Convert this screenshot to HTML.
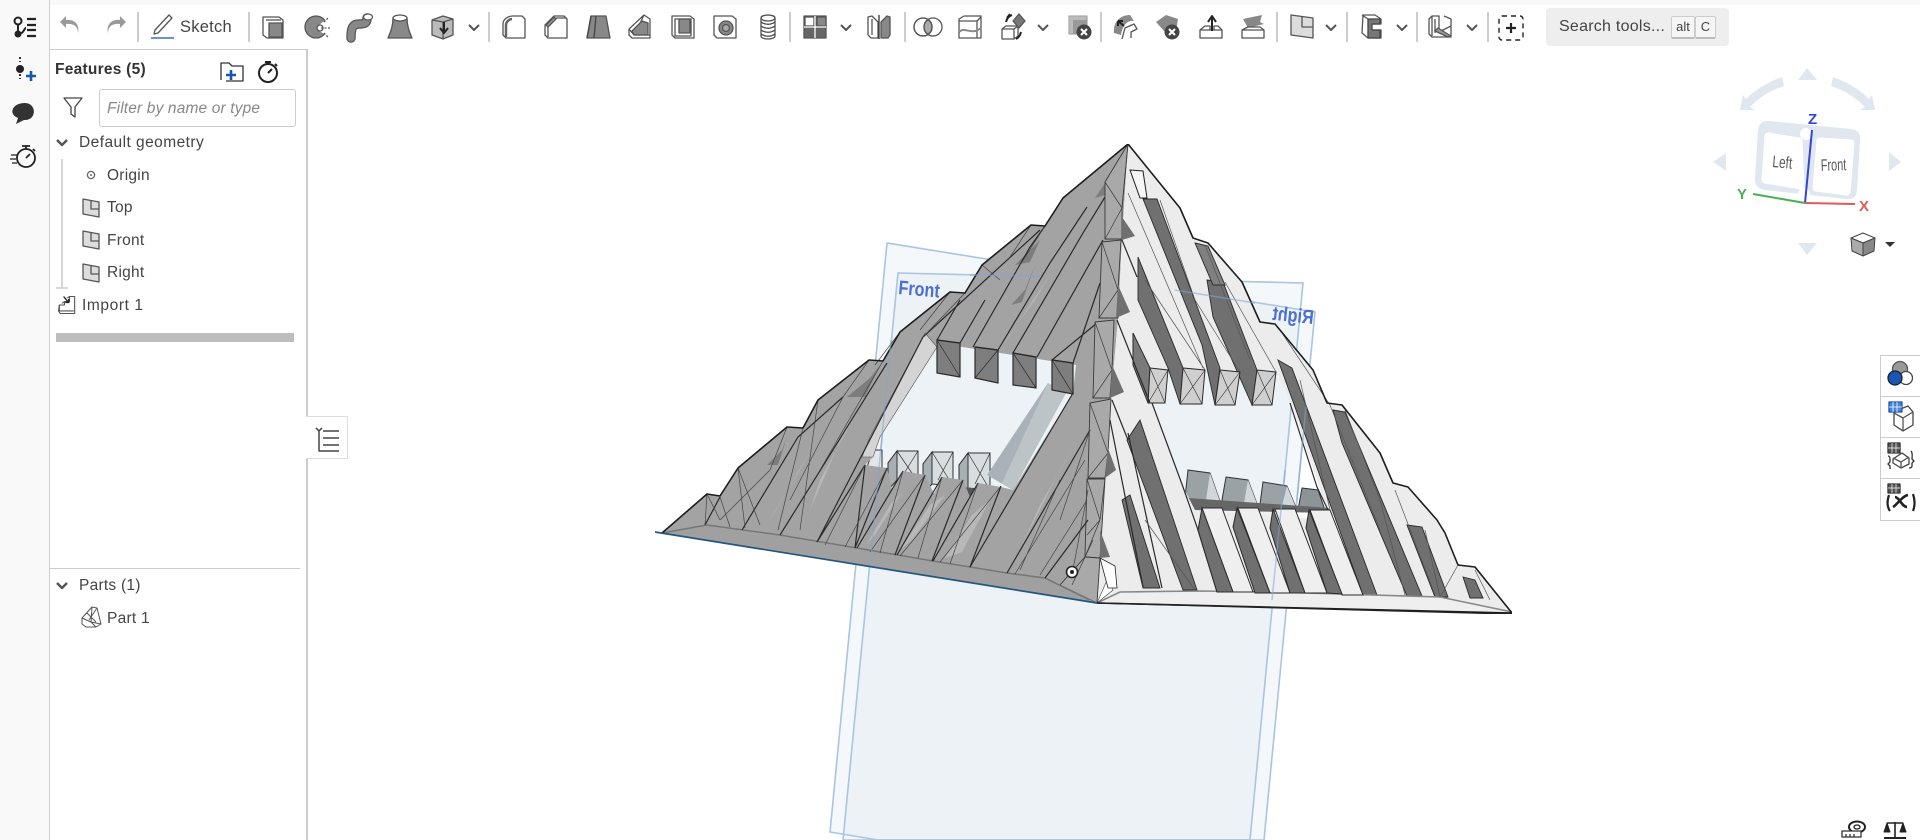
<!DOCTYPE html>
<html><head><meta charset="utf-8"><style>
html,body{margin:0;padding:0;width:1920px;height:840px;overflow:hidden;background:#fff;font-family:"Liberation Sans",sans-serif;color:#444}
.t{position:absolute;white-space:nowrap;font-size:15.5px;line-height:20px;letter-spacing:.25px}
svg{position:absolute;left:0;top:0}
#rail{position:absolute;left:0;top:0;width:50px;height:840px;background:#f9f9f9;border-right:1px solid #ccc;box-sizing:border-box}
#strip{position:absolute;left:0;top:0;width:1920px;height:5px;background:#f8f8f8}
#panel{position:absolute;left:50px;top:49px;width:258px;height:791px;background:#fff;border-top:1px solid #ccc;border-right:2px solid #ccc;box-sizing:border-box}
#search{position:absolute;left:1546px;top:8px;width:183px;height:38px;background:#eeeeee;border-radius:4px}
.k{position:absolute;top:8px;height:23px;background:#f5f5f5;border:1px solid #ccc;border-bottom:2px solid #bbb;border-radius:2px;box-sizing:border-box;font-size:13px;line-height:19px;text-align:center;color:#444}
#rp{position:absolute;left:1880px;top:355px;width:40px;height:166px;background:#fff;border:1px solid #ccc;border-right:0;box-sizing:border-box}
#rp i{position:absolute;left:0;width:40px;height:1px;background:#ccc}
#tab{position:absolute;left:306px;top:416px;width:42px;height:43px;background:#fff;border:1px solid #ddd;border-left:0;box-sizing:border-box}
</style></head><body>
<svg width="1920" height="840" viewBox="0 0 1920 840">
<defs><filter id="b" x="0" y="0" width="100%" height="100%"><feGaussianBlur stdDeviation="0.35"/></filter></defs>
<!-- planes -->
<g fill="rgb(195,210,225)" fill-opacity=".16" stroke="#a9c4e4" stroke-width="1.6">
<polygon points="887,243 1315,312 1264,840 878,840 830,832"/>
<polygon points="898,273 1303,283 1250,840 843,840"/>
</g>
<text transform="translate(898,294) rotate(5) scale(.9,1.1)" font-size="18" font-weight="bold" fill="#4a6fd0" style="font-family:'Liberation Sans',sans-serif">Front</text>
<text transform="translate(1313,324) rotate(-174) scale(.9,-1.1)" font-size="18" font-weight="bold" fill="#4a6fd0" style="font-family:'Liberation Sans',sans-serif">Right</text>
<!-- model -->
<g filter="url(#b)">
<!-- back teeth left -->
<g stroke="#333" stroke-width="1">
<polygon points="873,450 882,450 882,470 866,470" fill="#e4e7e9"/>
<polygon points="897,451 918,451 918,482 897,480 888,490 888,463" fill="#d8dde0"/>
<polygon points="897,451 888,463 888,490 897,480" fill="#a8b0b4"/>
<polygon points="932,452 953,452 953,486 932,484 923,494 923,464" fill="#d8dde0"/>
<polygon points="932,452 923,464 923,494 932,484" fill="#a8b0b4"/>
<polygon points="968,453 990,453 990,490 968,488 959,497 959,465" fill="#d8dde0"/>
<polygon points="968,453 959,465 959,497 968,488" fill="#a8b0b4"/>
<path d="M897,451L918,482M932,452L953,486M968,453L990,490M918,451L903,475M953,452L938,480M990,453L975,484" fill="none" stroke-width=".7"/>
</g>
<polygon points="963,487 1013,493 1010,500 960,500" fill="#555"/>
<polygon points="1002,495 1012,498 1006,506 998,503" fill="#fff"/>
<!-- back teeth right -->
<g stroke="#333" stroke-width="1">
<polygon points="1188,470 1210,473 1222,507 1192,508 1185,498" fill="#9aa2a6"/>
<polygon points="1210,473 1222,507 1205,507" fill="#d0d6da" stroke="none"/>
<polygon points="1226,477 1248,480 1259,509 1230,510 1222,500" fill="#9aa2a6"/>
<polygon points="1248,480 1259,509 1243,509" fill="#d0d6da" stroke="none"/>
<polygon points="1263,482 1287,486 1297,510 1268,510 1260,504" fill="#9aa2a6"/>
<polygon points="1287,486 1297,510 1281,510" fill="#d0d6da" stroke="none"/>
<polygon points="1302,488 1318,490 1325,510 1306,510 1298,510" fill="#8d9498"/>
</g>
<polygon points="1188,498 1330,508 1330,513 1188,510" fill="#666"/>
<!-- left body -->
<path fill-rule="evenodd" fill="#a3a3a3" d="M662,533L707,494 720,496 738,468 787,427 803,428 818,400 869,360 883,361 900,332 950,292 965,293 982,265 1031,225 1045,226 1063,198 1128,144 1122,239 1118,318 1111,399 1105,478 1100,558 1097,603Z
M937,343L1076,365 1073,393 1013,490 1001,487 978,483 970,497 963,480 942,477 934,494 925,475 903,471 892,490 887,468 865,465 873,457 880,437Z"/>
<!-- right body -->
<path fill-rule="evenodd" fill="#ececec" d="M1128,144L1180,208 1193,238 1208,243 1242,282 1260,322 1275,324 1313,370 1327,403 1342,405 1380,453 1393,483 1408,487 1437,520 1445,533 1458,565 1475,567 1512,613 1097,603 1100,558 1105,478 1111,399 1118,318 1122,239Z
M1148,403L1165,403 1169,370 1180,404 1202,404 1206,370 1215,405 1235,405 1242,372 1252,405 1272,405 1277,372 1290,403 1325,503 1336,520 1195,510 1183,487 1152,403Z"/>
<!-- left highlights -->
<g fill="#b8b8b8">
<polygon points="1060,470 1078,440 1040,505 1022,545"/>
<polygon points="800,470 812,448 776,510 768,522"/>
<polygon points="845,430 858,410 820,480 810,510"/>
<polygon points="930,505 945,495 912,540 900,550"/>
<polygon points="890,505 902,492 875,535 866,545"/>
<polygon points="972,515 990,500 962,552 945,558"/>
<polygon points="1035,300 1050,275 1010,335 1002,345"/>
</g>
<polygon points="925,333 937,347 880,437 873,457 862,457 870,437" fill="#d4d4d4" stroke="#555" stroke-width=".6"/>
<polygon points="1048,383 1066,393 1013,490 987,475" fill="#a9b2b8"/>
<polygon points="1048,383 1066,393 1013,490 1002,483" fill="#bcc4c8"/>
<!-- hip darker -->
<g fill="#7d7d7d">
<polygon points="847,397 870,378 880,365 865,397"/>
<polygon points="1011,305 1025,290 1035,265 1022,302"/>
<polygon points="1015,265 1040,240 1030,262"/>
<polygon points="767,465 782,450 787,437 778,465"/>
<polygon points="1095,198 1105,183 1105,195"/>
</g>
<!-- top teeth -->
<g stroke="#2a2a2a" stroke-width="1.2">
<polygon points="937,340 960,343 960,377 937,373" fill="#7e7e7e"/>
<polygon points="975,347 998,350 998,383 975,378" fill="#7e7e7e"/>
<polygon points="1013,353 1036,357 1036,388 1013,385" fill="#7e7e7e"/>
<polygon points="1052,360 1073,363 1073,394 1052,390" fill="#7e7e7e"/>
<path d="M937,340L960,377M975,378L998,350M1013,353L1036,388M1052,360L1073,394" fill="none" stroke-width=".7"/>
<path d="M937,340L960,300M960,343L985,300M937,340L960,343M975,347L998,350M1013,353L1036,357M1052,360L1073,363M973,347L1030,247 1045,226M998,350L1050,263 1087,207M1013,353L1083,233 1105,197M1037,357L1103,240M1052,360L1097,323M1073,363L1100,283" fill="none"/>
</g>
<!-- central column -->
<g fill="#a9a9a9" stroke="#3a3a3a" stroke-width=".9">
<polygon points="1105,182 1128,144 1122,208 1122,239 1105,239"/>
<polygon points="1102,242 1121,240 1118,290 1118,318 1099,318"/>
<polygon points="1095,322 1114,320 1112,370 1110,398 1093,398"/>
<polygon points="1090,403 1111,399 1108,453 1105,478 1088,478"/>
<polygon points="1087,479 1105,479 1100,558 1085,557"/>
<polygon points="1085,557 1100,558 1097,603 1060,585"/>
<path d="M1105,182L1122,208M1105,239L1122,208M1128,144L1122,208M1102,242L1118,290M1099,318L1118,290M1095,322L1112,370M1093,398L1112,370M1090,403L1108,453M1088,478L1108,453M1087,479L1100,520 1085,557M1087,535L1100,520M1093,540L1072,585M1105,479L1100,520" fill="none" stroke-width=".7"/>
</g>
<g fill="#6f6f6f">
<polygon points="1122,217 1135,236 1122,240"/>
<polygon points="1118,285 1130,312 1116,318"/>
<polygon points="1112,365 1124,392 1110,398"/>
<polygon points="1108,448 1116,470 1105,478"/>
<polygon points="1100,530 1110,557 1100,558"/>
</g>
<!-- right dark stripes -->
<g fill="#6f6f6f" stroke="#2a2a2a" stroke-width=".9">
<polygon points="1143,199 1157,199 1220,368 1215,405 1202,345"/>
<polygon points="1138,257 1183,368 1180,404 1168,368 1138,300"/>
<polygon points="1207,280 1223,282 1257,370 1252,405 1213,317"/>
<polygon points="1122,500 1130,495 1160,588 1143,588"/>
<polygon points="1127,440 1140,420 1197,590 1183,590"/>
<polygon points="1278,360 1292,368 1377,595 1363,595"/>
<polygon points="1333,410 1345,412 1422,596 1407,596 1342,443"/>
<polygon points="1407,525 1422,527 1448,597 1435,597"/>
<polygon points="1463,577 1475,580 1483,598 1470,598"/>
<polygon points="1195,243 1208,246 1225,285 1213,285" fill="#808080"/>
</g>
<!-- top teeth right -->
<g stroke="#2a2a2a" stroke-width="1">
<polygon points="1133,333 1150,368 1148,403 1133,365" fill="#7a7a7a"/>
<polygon points="1150,368 1168,370 1165,403 1148,403" fill="#cfcfcf"/>
<polygon points="1183,368 1205,370 1202,404 1180,404" fill="#cfcfcf"/>
<polygon points="1220,370 1240,372 1235,405 1215,405" fill="#cfcfcf"/>
<polygon points="1257,370 1276,372 1272,405 1252,405" fill="#cfcfcf"/>
<path d="M1150,368L1165,403M1168,370L1148,403M1183,368L1202,404M1205,370L1180,404M1220,370L1235,405M1240,372L1215,405M1257,370L1272,405M1276,372L1252,405" fill="none" stroke-width=".6"/>
</g>
<!-- white small top -->
<polygon points="1130,170 1143,171 1147,198 1140,198" fill="#f5f5f5" stroke="#222"/>
<!-- base strips -->
<polygon points="662,533 707,525 780,535 817,542 857,548 895,555 933,561 970,567 1007,573 1045,578 1097,603" fill="#a0a0a0"/>
<path d="M662,533L707,525 780,535 857,548 933,561 1007,573 1045,578 1090,600" fill="none" stroke="#777" stroke-width="1.6"/>
<polygon points="1097,603 1120,592 1200,592 1273,593 1340,594 1440,597 1512,613" fill="#efefef"/>
<path d="M1097,603L1120,592 1200,591 1273,592 1340,594 1440,597 1512,612" fill="none" stroke="#888" stroke-width="1.6"/>
<polygon points="1097,603 1108,578 1113,590" fill="#fff" stroke="#444" stroke-width=".6"/>
<polygon points="1100,558 1115,566 1117,588 1108,588" fill="#fff" stroke="#222" stroke-width=".8"/>
<!-- left mesh -->
<g fill="none" stroke="#2a2a2a" stroke-width="1.2">
<path d="M705,525L720,497M742,530L798,437 843,397M780,535L887,363M817,542L923,337M855,548L865,465M817,542L865,465M887,468L855,548M857,548L903,471M925,475L895,555M897,555L942,477M963,480L932,561M933,561L978,483M1001,486L970,567"/>
<path d="M1007,573L1090,430M970,567L1073,393M1045,578L1088,520M923,337L1040,230"/>
</g>
<g fill="none" stroke="#444" stroke-width=".7">
<path d="M738,468L760,525M738,468L745,528M770,470L720,520M787,427L770,470M803,428L778,530M818,400L800,530M843,397L790,500M869,360L843,397M883,361L820,470M900,332L875,365M950,292L920,330M965,293L925,335M982,265L1000,280M1031,225L1008,260M1045,226L1020,265M707,494L705,525M707,494L720,520M720,497L730,527"/>
<path d="M865,465L825,545M887,468L845,547M903,471L880,553M925,475L870,552M942,477L918,558M963,480L900,556M978,483L950,564M1001,486L940,562M1060,480L1020,570M1085,460L1015,574M1087,500L1040,575M1090,430L1060,520M1072,575L1088,490"/>
</g>
<!-- right edges -->
<g fill="none" stroke="#2a2a2a" stroke-width="1.2">
<path d="M1152,403L1183,487 1197,527 1217,592M1110,420L1143,587M1128,433L1162,588M1290,403L1317,487 1328,510M1122,240L1137,277M1117,320L1150,403M1112,400L1128,440"/>
</g>
<g fill="none" stroke="#555" stroke-width=".7">
<path d="M1128,193L1203,368M1160,200L1195,300 1240,372M1145,280L1205,370M1205,245L1250,360M1225,282L1276,372M1280,330L1330,405 1380,530M1300,380L1330,510 1360,590M1345,410L1380,500 1405,595M1395,490L1435,595M1145,520L1195,590M1425,530L1440,597 1458,565M1475,570L1490,600"/>
</g>
<!-- front teeth right -->
<g stroke="#2a2a2a" stroke-width="1">
<polygon points="1202,508 1222,508 1253,592 1233,592" fill="#efefef"/>
<polygon points="1202,508 1198,530 1217,592 1233,592" fill="#6f6f6f"/>
<polygon points="1238,508 1258,508 1290,593 1270,593" fill="#efefef"/>
<polygon points="1237,508 1233,527 1255,593 1270,593" fill="#6f6f6f"/>
<polygon points="1275,509 1295,509 1327,593 1305,593" fill="#efefef"/>
<polygon points="1273,509 1270,528 1290,593 1305,593" fill="#6f6f6f"/>
<polygon points="1310,510 1330,510 1363,595 1342,595" fill="#efefef"/>
<polygon points="1309,510 1306,528 1327,593 1342,594" fill="#6f6f6f"/>
</g>
<!-- outlines -->
<path fill="none" stroke="#1e1e1e" stroke-width="1.6" stroke-linejoin="round" d="M662,533L707,494 720,496 738,468 787,427 803,428 818,400 869,360 883,361 900,332 950,292 965,293 982,265 1031,225 1045,226 1063,198 1128,144 1180,208 1193,238 1208,243 1242,282 1260,322 1275,324 1313,370 1327,403 1342,405 1380,453 1393,483 1408,487 1437,520 1445,533 1458,565 1475,567 1512,613 1097,603"/>
<path d="M1097,603L1512,614" fill="none" stroke="#222" stroke-width="1.5"/>
<path d="M655,532L1097,603" fill="none" stroke="#26557f" stroke-width="1.7"/>
<!-- origin -->
<circle cx="1072" cy="572" r="5.5" fill="#fff" stroke="#222" stroke-width="1.6"/><circle cx="1072" cy="572" r="2" fill="#222"/>
</g>
<!-- plane lines in front of model -->
<g stroke="#7fa5d6" stroke-opacity=".55" stroke-width="1.5" fill="none">
<path d="M891,340L870,565M970,275L1040,276M1175,290L1255,303M1306,407L1297,500M1285,470L1272,600"/>
</g>
<!-- gizmo -->
<g fill="#e0e7ef">
<polygon points="1807,68 1798,80 1817,80"/>
<polygon points="1713,162 1726,153 1726,171"/><polygon points="1901,162 1889,152 1889,171"/>
<polygon points="1798,243 1817,243 1807,255"/>
<path d="M1782,77L1784,86C1769,91 1759,98 1750,107L1755,110 1740,110 1743,95 1746,99C1756,89 1768,82 1782,77Z"/>
<path d="M1833,77L1831,86C1846,91 1856,98 1865,107L1860,110 1875,110 1872,95 1869,99C1859,89 1847,82 1833,77Z"/>
<path d="M1769,121L1851,129Q1861,130 1860,140L1857,191Q1856,200 1846,199L1765,190Q1754,188 1755,178L1758,131Q1759,120 1769,121Z"/>
</g>
<g fill="#fff" stroke="#fff" stroke-width="7" stroke-linejoin="round">
<polygon points="1768,136 1799,141 1801,186 1765,180"/>
<polygon points="1820,141 1851,143 1847,192 1816,188"/>
</g>
<circle cx="1806" cy="134" r="6" fill="#fff"/><circle cx="1804" cy="194" r="6" fill="#fff"/>
<text transform="translate(1772,167) rotate(5) scale(.85,1.2)" font-size="14" fill="#5a5a5a" style="font-family:'Liberation Sans',sans-serif">Left</text>
<text transform="translate(1821,171) rotate(-2) scale(.78,1.2)" font-size="14" fill="#5a5a5a" style="font-family:'Liberation Sans',sans-serif">Front</text>
<path d="M1805,203L1812,130" stroke="#3344dd" stroke-width="2" fill="none"/>
<path d="M1805,203L1753,194" stroke="#4ab054" stroke-width="2" fill="none"/>
<path d="M1805,203L1855,204" stroke="#e05a5a" stroke-width="2" fill="none"/>
<text x="1808" y="124" font-size="15" font-weight="bold" fill="#3344dd" style="font-family:'Liberation Sans',sans-serif">Z</text>
<text x="1737" y="199" font-size="15" font-weight="bold" fill="#4ab054" style="font-family:'Liberation Sans',sans-serif">Y</text>
<text x="1859" y="211" font-size="15" font-weight="bold" fill="#e05a5a" style="font-family:'Liberation Sans',sans-serif">X</text>
<g stroke="#444" stroke-width="1" stroke-linejoin="round"><polygon points="1851,238 1863,233 1875,238 1863,243" fill="#fff"/><polygon points="1851,238 1863,243 1863,256 1852,251" fill="#aaa"/><polygon points="1875,238 1863,243 1863,256 1874,251" fill="#888"/></g>
<polygon points="1885,242 1895,242 1890,247" fill="#333"/>
</svg>
<div id="strip"></div>
<div id="rail"></div>
<div id="panel"></div>
<div id="tab"></div>
<div id="search"><div class="t" style="left:13px;top:9px;font-size:16px;color:#444">Search tools...</div><div class="k" style="left:125px;width:24px">alt</div><div class="k" style="left:149px;width:21px">C</div></div>
<div id="rp"><i style="top:40px"></i><i style="top:81px"></i><i style="top:122px"></i></div>
<div class="t" style="left:55px;top:60px;font-weight:bold;font-size:15.5px;color:#333">Features (5)</div>
<div style="position:absolute;left:99px;top:89px;width:197px;height:38px;border:1px solid #ccc;border-radius:3px;box-sizing:border-box"></div>
<div class="t" style="left:107px;top:99px;font-style:italic;color:#888;letter-spacing:.15px">Filter by name or type</div>
<div class="t" style="left:79px;top:133px;letter-spacing:.45px">Default geometry</div>
<div class="t" style="left:107px;top:166px">Origin</div>
<div class="t" style="left:107px;top:198px">Top</div>
<div class="t" style="left:107px;top:231px">Front</div>
<div class="t" style="left:107px;top:263px">Right</div>
<div class="t" style="left:82px;top:296px;letter-spacing:.6px">Import 1</div>
<div style="position:absolute;left:56px;top:333px;width:238px;height:9px;background:#bdbdbd"></div>
<div style="position:absolute;left:50px;top:568px;width:250px;height:1px;background:#ccc"></div>
<div class="t" style="left:79px;top:576px">Parts (1)</div>
<div class="t" style="left:107px;top:609px">Part 1</div>
<div class="t" style="left:180px;top:17px;font-size:16.5px;color:#444">Sketch</div>
<!-- UI icons -->
<svg width="1920" height="840" viewBox="0 0 1920 840" style="pointer-events:none">
<g fill="none" stroke="#555" stroke-width="1.3" stroke-linejoin="round">
<!-- separators -->
<g stroke="#ccc" stroke-width="2"><path d="M138,12V42M249,12V42M489,12V42M790,12V42M905,12V42M1101,12V42M1277,12V42M1347,12V42M1417,12V42M1488,12V42"/></g>
<!-- chevrons -->
<g stroke="#555" stroke-width="2"><path d="M469,25l5,5 5-5M841,25l5,5 5-5M1038,25l5,5 5-5M1326,25l5,5 5-5M1397,25l5,5 5-5M1467,25l5,5 5-5"/></g>
<!-- undo/redo -->
<path d="M78,33C78,26 73,23 66,24V28L60,22 66,16V20C74,19 80,24 78,33Z" fill="#9a9a9a" stroke="none"/>
<path d="M108,33C108,26 113,23 120,24V28L126,22 120,16V20C112,19 106,24 108,33Z" fill="#9a9a9a" stroke="none"/>
<!-- pencil -->
<path d="M155,30L169,15 172,18 158,33 154,34Z" stroke="#555"/><path d="M151,38H174" stroke="#3f6fc0" stroke-width="1.6"/>
<!-- extrude -->
<g transform="translate(273,27)"><path d="M-10,-10H6L10,-7V11H-6L-10,8Z" fill="#fff"/><path d="M-7,-7H8"/><rect x="-4" y="-4" width="13" height="14" fill="#888"/></g>
<!-- revolve -->
<g transform="translate(316,27)"><circle r="11" fill="#888"/><path d="M3,-2L12,-9V9L3,4Z" fill="#fff" stroke="none"/><circle cx="4" cy="1" r="3" fill="#fff"/><path d="M5,1H14M8,-5L12,-9M8,6L12,10" stroke-dasharray="2 1.5"/></g>
<!-- sweep -->
<g transform="translate(359,27)"><path d="M-8,11C-8,0 -6,-3 0,-3C6,-3 8,-4 8,-9" stroke="#555" stroke-width="9.5" stroke-linecap="round"/><path d="M-8,11C-8,0 -6,-3 0,-3C6,-3 8,-4 8,-9" stroke="#888" stroke-width="7" stroke-linecap="round"/><ellipse cx="9" cy="-10" rx="4.5" ry="3" fill="#fff"/></g>
<!-- loft -->
<g transform="translate(400,27)"><path d="M-7,-9C-7,0 -10,6 -12,11H12C10,6 7,0 7,-9Z" fill="#888"/><ellipse cy="-9" rx="7" ry="3" fill="#fff"/></g>
<!-- thicken -->
<g transform="translate(443,27)"><path d="M-11,-7L0,-11 10,-8V8L0,12 -11,8Z" fill="#bbb"/><path d="M0,-5L-11,-7M0,-5L10,-8M0,-5V12" /><path d="M1,-5V4M-3,1L1,6 5,1" stroke="#222" stroke-width="2"/></g>
<!-- fillet -->
<g transform="translate(514,27)"><path d="M-11,-3C-11,-8 -6,-11 -1,-11H8L11,-8V11H-8L-11,8Z" fill="#fff"/><path d="M-8,10V-2C-8,-5 -5,-8 -2,-8" stroke="#666" stroke-width="2.5"/></g>
<g transform="translate(556,27)"><path d="M-11,-2L-2,-11H8L11,-8V11H-8L-11,8Z" fill="#fff"/><path d="M-8,10V-2L0,-9H10" /><path d="M-10,-2L-2,-10 0,-8 -8,0Z" fill="#999"/></g>
<g transform="translate(599,27)"><path d="M-8,-11H7L11,11H-12Z" fill="#888"/><path d="M-8,-11L-12,11M-3,-11L-5,11" stroke="#444"/></g>
<g transform="translate(640,27)"><path d="M-11,2L4,-12 10,-8V11H-8L-11,8Z" fill="#fff"/><path d="M-11,2L-6,8H10M4,-12L-3,3" /><path d="M-8,4L2,-6 8,-4V8H-6Z" fill="#888"/></g>
<g transform="translate(683,27)"><path d="M-11,-11H7L11,-8V11H-8L-11,8Z" fill="#fff"/><path d="M-8,-8H8V9H-8Z"/><rect x="-4" y="-8" width="11" height="14" fill="#888"/></g>
<g transform="translate(725,27)"><path d="M-11,-11H7L11,-8V11H-8L-11,8Z" fill="#fff"/><circle cx="1" cy="1" r="7" fill="#888"/><circle cx="1" cy="1" r="3.5" fill="#aaa"/></g>
<g transform="translate(768,27)"><path d="M-7,-9C-7,-13 7,-13 7,-9V9C7,13 -7,13 -7,9Z" fill="#fff"/><ellipse cy="-9" rx="7" ry="3"/><path d="M-7,-5C-3,-2 3,-2 7,-5M-7,-1C-3,2 3,2 7,-1M-7,3C-3,6 3,6 7,3M-7,7C-3,10 3,10 7,7" stroke="#444"/></g>
<!-- pattern -->
<g transform="translate(815,27)"><rect x="-11" y="-11" width="22" height="22" fill="#666"/><rect x="-10" y="-10" width="9" height="9" fill="#fff"/><rect x="2" y="-10" width="9" height="9" fill="#888"/><path d="M-11,0H11M0,-11V11" stroke="#fff"/></g>
<g transform="translate(879,27)"><path d="M-11,-10L-7,-11 -1,-5V11H-8L-11,8Z" fill="#fff"/><path d="M2,-5L8,-11 11,-10V8L9,11H2Z" fill="#888"/><path d="M0,-12V12" stroke="#333"/><path d="M-7,-8V8" /></g>
<!-- boolean -->
<g transform="translate(928,27)"><circle cx="-5" r="9" fill="#fff"/><path d="M0,-7.5A9,9 0 0 1 0,7.5A9,9 0 0 1 0,-7.5Z" fill="#aaa"/><circle cx="-5" r="9"/><circle cx="5" r="9"/></g>
<g transform="translate(970,27)"><path d="M-11,-8L-6,-11H11V11H-11Z" fill="#fff"/><path d="M-11,-6H7L11,-10M7,-6V11"/><path d="M-11,5C-5,-1 1,9 11,1" stroke="#888" stroke-width="2"/></g>
<g transform="translate(1013,27)"><path d="M-11,2L-7,-1H5V9L1,12H-11Z" fill="#fff"/><path d="M-11,2H1V12M1,2L5,-1"/><path d="M6,-13L12,-6 6,1 0,-6Z" fill="#777"/><path d="M-7,-5C-6,-9 -4,-11 -1,-12M-3,-13L-6,-9" stroke="#222" stroke-width="2"/><path d="M8,5C7,9 5,11 3,12" stroke="#222" stroke-width="2"/></g>
<g transform="translate(1079,27)"><rect x="-10" y="-11" width="18" height="18" fill="#bbb" stroke="#aaa"/><rect x="-6" y="-7" width="14" height="14" fill="#999" stroke="none"/><circle cx="5" cy="5" r="7.5" fill="#444" stroke="none"/><path d="M2,2L8,8M8,2L2,8" stroke="#fff" stroke-width="2"/></g>
<!-- direct edit -->
<g transform="translate(1125,27)"><path d="M-11,6C-12,-6 -4,-12 5,-12L9,-6C4,-7 -2,-4 -4,8Z" fill="#888" stroke="none"/><path d="M-3,12L0,1 9,-3 12,2 6,5 6,11" fill="#fff"/><path d="M-7,-6L-1,-1M-7,-6V-1M-7,-6H-2" stroke="#222" stroke-width="2"/></g>
<g transform="translate(1168,27)"><path d="M-12,-5L-2,-12 10,-8 8,4 -4,4Z" fill="#888" stroke="none"/><circle cx="4" cy="5" r="7.5" fill="#444" stroke="none"/><path d="M1,2L7,8M7,2L1,8" stroke="#fff" stroke-width="2"/></g>
<g transform="translate(1211,27)"><path d="M-11,3L-6,-1H-1V3H3V-1H7L11,3V11H-11Z" fill="#fff"/><path d="M-11,3H-1M3,3H11"/><path d="M1,4V-9M-3,-5L1,-11 5,-5" stroke="#222" stroke-width="2"/></g>
<g transform="translate(1253,27)"><path d="M-10,-8L9,-12 7,-5 11,-3 -5,1Z" fill="#888" stroke="none"/><path d="M-11,3L-5,0H7L11,3V11H-11Z" fill="#fff"/><path d="M-11,3H11"/></g>
<!-- plane -->
<g transform="translate(1302,27)"><path d="M-11,-12L11,-9V11L-11,8Z" fill="#ddd"/><path d="M0,-11V0H11"/></g>
<g transform="translate(1371,27)"><path d="M-8,-12H4L10,-8V-3H0V3H10V11H-3L-9,6Z" fill="#fff"/><path d="M-3,-8H9V-3H1V3H9V11H-3Z" fill="#777" stroke="#444"/><path d="M-3,-8L-9,-12"/></g>
<g transform="translate(1440,27)"><path d="M-11,-8L-8,-11H-1V5L11,-1V10H-8L-11,7Z" fill="#fff"/><path d="M-8,-11V9M-5,-8V6M4,-11L11,-8V-1"/><path d="M-5,4L-2,1 11,9 8,10Z" fill="#999"/></g>
<!-- dashed plus -->
<g transform="translate(1511,27)"><rect x="-12" y="-11" width="24" height="24" rx="3" stroke="#222" stroke-dasharray="5 4" stroke-width="1.4"/><path d="M0,-4V6M-5,1H5" stroke="#222" stroke-width="2.2"/></g>
<!-- rail -->
<g transform="translate(24,27)" stroke="#222" stroke-width="2"><circle cx="-6" cy="-6" r="3.5"/><path d="M-6,-2V7" /><circle cx="-6" cy="7" r="2.5" fill="#222"/><path d="M-6,7C0,7 0,1 2,1"/><path d="M3,-8H12M3,-2H12M3,3H12M3,9H12" stroke-width="2.2"/></g>
<g transform="translate(20,68)"><circle r="4" cy="1" fill="#222" stroke="none"/><path d="M0,-11V-6M0,6V11" stroke="#333" stroke-width="2" stroke-dasharray="2 2"/><path d="M6,8H16M11,3V13" stroke="#1a56b0" stroke-width="2.6"/></g>
<path d="M25,103C37,103 37,121 24,120L16,124 18,118C8,114 12,103 25,103Z" fill="#333" stroke="none"/>
<g transform="translate(26,158)" stroke="#222" stroke-width="1.8"><circle r="9"/><path d="M-4,-12H4M0,-12V-9M0,0L4,-4M7,-9L9,-7" /><path d="M-15,-3H-9M-16,1H-10M-14,5H-9" stroke-width="1.2"/></g>
<!-- panel icons -->
<g transform="translate(232,72)"><path d="M-11,8V-9H-3L0,-6H11V9H-6" stroke="#333"/><path d="M-6,3H4M-1,-2V8" stroke="#1a56b0" stroke-width="2.6"/></g>
<g transform="translate(268,72)" stroke="#222" stroke-width="2"><circle r="9" cy="1"/><path d="M-3,-10H3M0,-10V-8M0,1L4,-3M7,-8L9,-6"/></g>
<path d="M64,98H82L75,107V117L71,114V107Z" stroke="#444"/>
<path d="M57,140l5,5 5-5" stroke="#555" stroke-width="2.4"/>
<path d="M57,583l5,5 5-5" stroke="#555" stroke-width="2.4"/>
<path d="M62,159V288M56,288H68" stroke="#ccc" stroke-width="1.6"/>
<circle cx="91" cy="175" r="3.6" stroke="#666"/><circle cx="91" cy="175" r="1" fill="#666" stroke="none"/>
<g fill="#ddd"><path d="M83,199L99,202V217L83,214Z"/><path d="M83,231L99,234V249L83,246Z"/><path d="M83,264L99,267V282L83,279Z"/></g>
<path d="M91,200V209H99M91,232V241H99M91,265V274H99"/>
<g transform="translate(67,305) scale(.85)"><path d="M-9,0H-3V-4H3V-10H9V10H-8L-10,7Z" fill="#fff"/><path d="M-9,0L-9,7H8M-3,-4L-6,-2M3,-10L0,-8"/><path d="M-4,-10L1,-4M-2,-3H2V-7" stroke="#222" stroke-width="1.6"/></g>
<g transform="translate(91,618)" stroke="#555" stroke-width="1"><path d="M-9,6L-9,0 1,-11 6,-10 10,6 5,9H-5Z" fill="#fff"/><path d="M-9,0L0,4 5,9M0,4L1,-11M0,4L10,6M-4,-5L5,4M6,-10L-2,2" /></g>
<!-- tab -->
<path d="M316,428l3,3 3-3M323,431H339M323,438H339M323,445H339M323,451H339M319,431V451H323" stroke="#444" stroke-width="1.5"/>
<!-- right panel icons -->
<g transform="translate(1900,375)"><circle cy="-6" r="7.5" fill="#999" stroke="#555"/><circle cx="6" cy="3" r="6.5" fill="#fff" stroke="#444"/><circle cx="-5" cy="3" r="7" fill="#1a56b0" stroke="#123"/></g>
<g transform="translate(1900,416)"><path d="M-2,-6L8,-10 13,-4V9L3,15 -6,9V-3Z" stroke="#444"/><path d="M-6,-3L3,2 13,-4M3,2V15"/><rect x="-11" y="-14" width="13" height="10" fill="#4a85d8" stroke="#1a56b0"/><path d="M-7,-14V-4M-3,-14V-4M-11,-9H2" stroke="#fff" stroke-width=".8"/></g>
<g transform="translate(1900,457)"><rect x="-12" y="-14" width="12" height="10" fill="#555" stroke="#333"/><path d="M-8,-14V-4M-4,-14V-4M-12,-9H0" stroke="#fff" stroke-width=".7"/><path d="M-7,2L2,-4 9,1V7L1,11 -7,6Z" fill="#fff" stroke="#444"/><path d="M-7,1L1,5 9,0M1,5V11"/><path d="M-12,-1C-11,-1 -10,0 -10,2V5L-12,7 -10,9V12" stroke="#333"/><path d="M11,-6C13,-4 12,0 12,2L14,4 12,6V9C12,11 10,11 9,11" stroke="#333"/></g>
<g transform="translate(1900,498)"><rect x="-12" y="-14" width="12" height="9" fill="#555" stroke="#333"/><path d="M-8,-14V-5M-4,-14V-5M-12,-10H0" stroke="#fff" stroke-width=".7"/><path d="M-11,-3C-13,3 -13,9 -10,13M13,-4C15,2 15,8 13,13" stroke="#222" stroke-width="2.2"/><path d="M-5,-1C-1,-1 2,9 7,9M8,-3C2,-2 -3,7 -7,9" stroke="#222" stroke-width="2.6"/></g>
<!-- bottom right icons -->
<g transform="translate(1853,830)"><ellipse cx="4" cy="-3" rx="8" ry="5.5" stroke="#222" stroke-width="2"/><ellipse cx="4" cy="-3" rx="3" ry="2" stroke="#222"/><path d="M-11,1H8V7H-11ZM-7,4V7M-3,4V7M1,4V7" fill="#fff" stroke="#333"/></g>
<g transform="translate(1895,830)" stroke="#222"><path d="M-11,8H11" stroke-width="2"/><path d="M0,-8V8M-8,-7H8" stroke-width="1.6"/><path d="M-8,-7L-11,2H-5ZM8,-7L5,2H11Z" fill="#222" stroke-width="1"/></g>
</g>
</svg>
</body></html>
